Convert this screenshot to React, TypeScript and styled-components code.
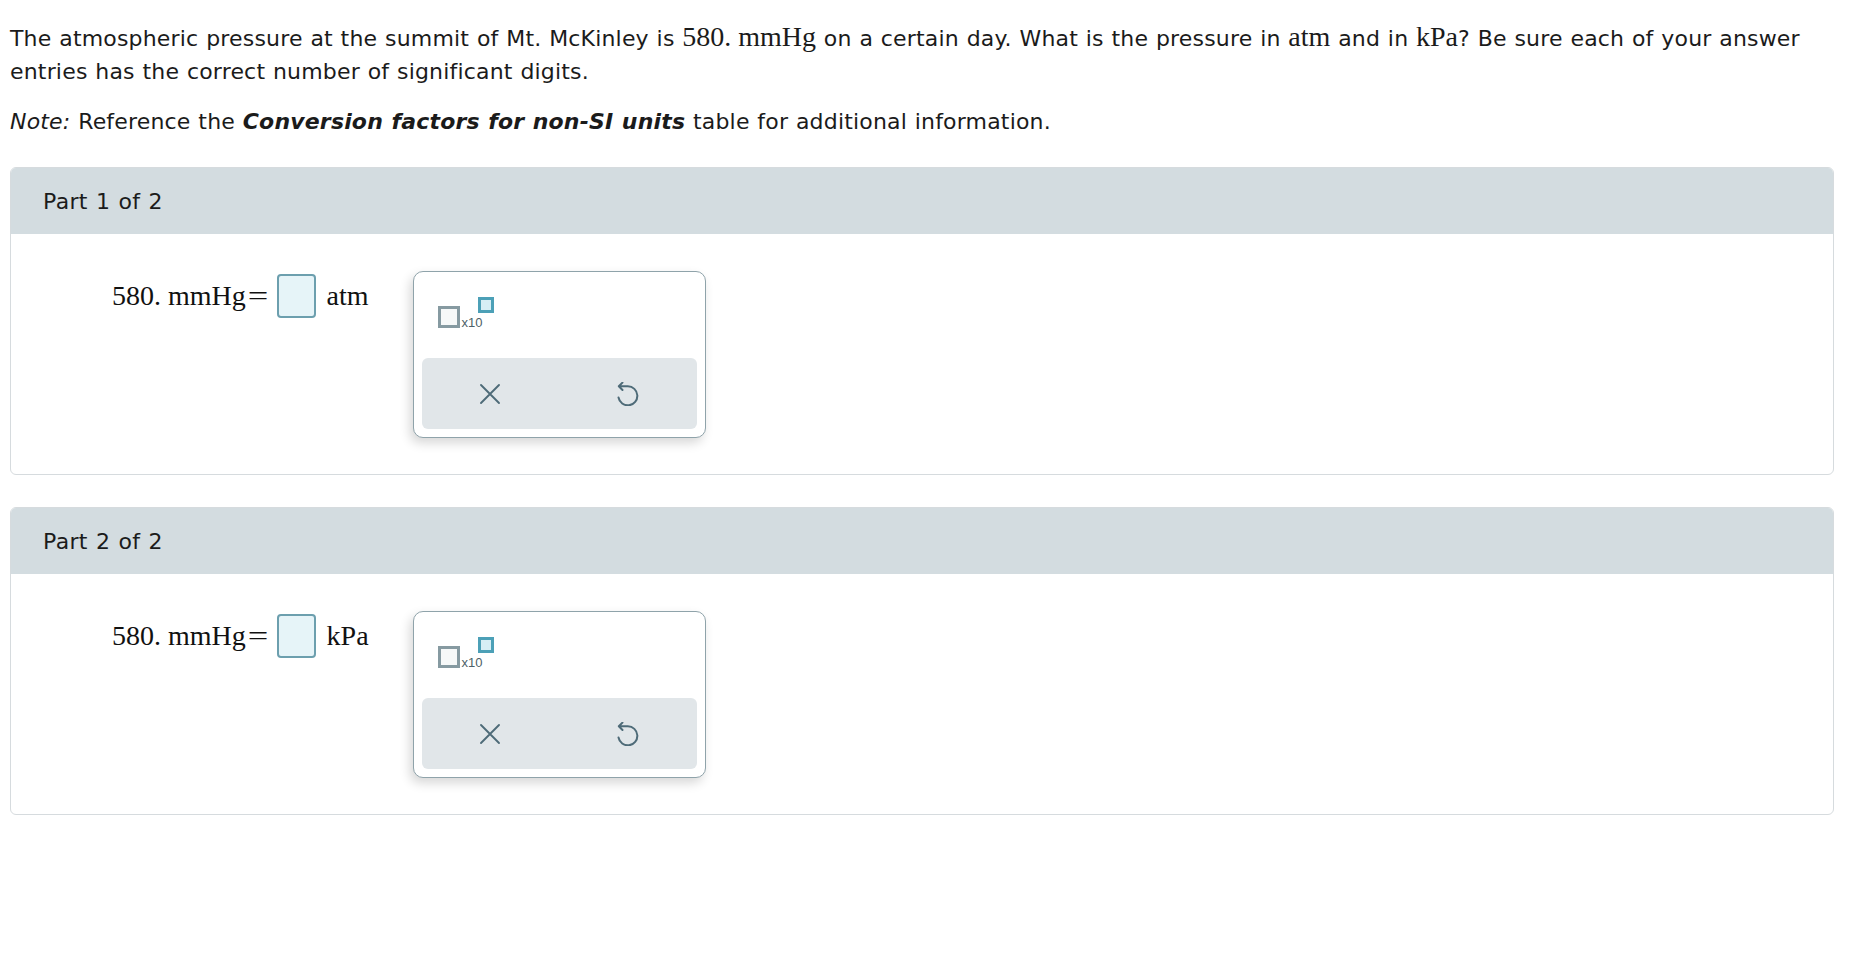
import React from "react";
import styled, { createGlobalStyle } from "styled-components";

const GlobalStyle = createGlobalStyle`
  html, body {
    margin: 0;
    padding: 0;
    background: #ffffff;
  }
  body {
    font-family: "DejaVu Sans", Verdana, sans-serif;
    color: #1b1b1b;
  }
`;

const Page = styled.div`
  padding: 22px 28px 40px 10px;
`;

const Prompt = styled.p`
  margin: 0;
  font-size: 22px;
  line-height: 33px;
  letter-spacing: 0.18px;
  word-spacing: 0.6px;
`;

const Note = styled(Prompt)`
  margin-top: 17px;
`;

const Math = styled.span`
  font-family: "Liberation Serif", "Times New Roman", serif;
  font-size: 28px;
  line-height: 1;
  letter-spacing: 0;
  word-spacing: 0;
`;

const Strong = styled.strong`
  font-weight: bold;
  font-style: italic;
`;

const Parts = styled.div`
  display: flex;
  flex-direction: column;
  gap: 32px;
  margin-top: 29px;
`;

const Panel = styled.section`
  border: 1px solid #d6dbde;
  border-radius: 6px;
  overflow: hidden;
`;

const PanelHead = styled.div`
  height: 66px;
  display: flex;
  align-items: center;
  padding-left: 32px;
  background: #d3dce0;
  font-size: 22px;
  letter-spacing: 0.35px;
  word-spacing: 0.8px;
`;

const PanelBody = styled.div`
  display: flex;
  align-items: flex-start;
  padding: 37px 0 36px 101px;
`;

const Equation = styled.div`
  display: flex;
  align-items: center;
  margin-top: 3px;
  font-family: "Liberation Serif", "Times New Roman", serif;
  font-size: 28px;
  color: #111;
`;

const Equals = styled.span`
  display: inline-block;
  margin: 0 11px 0 4px;
  transform: scaleX(1.3);
`;

const AnswerBox = styled.div`
  width: 39px;
  height: 44px;
  box-sizing: border-box;
  border: 2px solid #6c9fae;
  border-radius: 4px;
  background: #e6f4f8;
  margin-right: 11px;
`;

const Popup = styled.div`
  width: 293px;
  height: 167px;
  box-sizing: border-box;
  margin-left: 44px;
  padding: 8px;
  border: 1px solid #8fa3aa;
  border-radius: 10px;
  background: #fff;
  box-shadow: -3px 5px 11px rgba(0, 0, 0, 0.16);
  display: flex;
  flex-direction: column;
`;

const TopRow = styled.div`
  height: 78px;
  padding: 17px 0 0 16px;
  box-sizing: border-box;
`;

const Sci = styled.div`
  display: inline-flex;
  align-items: flex-end;
  height: 31px;
`;

const BaseBox = styled.span`
  width: 22px;
  height: 22px;
  box-sizing: border-box;
  border: 3px solid #869aa1;
  background: #f6f8f8;
`;

const TimesTen = styled.span`
  font-family: "Liberation Sans", Arial, sans-serif;
  font-size: 13px;
  line-height: 13px;
  color: #4d5f67;
  margin: 0 0 -1px 2px;
`;

const SupBox = styled.span`
  align-self: flex-start;
  width: 16px;
  height: 16px;
  box-sizing: border-box;
  margin-left: -5px;
  border: 3px solid #4ca0b7;
  background: #d6eef5;
`;

const ButtonBar = styled.div`
  height: 71px;
  border-radius: 6px;
  background: #e1e6e9;
  display: grid;
  grid-template-columns: 1fr 1fr;
`;

const IconButton = styled.button`
  border: 0;
  background: transparent;
  padding: 0;
  display: flex;
  align-items: center;
  justify-content: center;
  color: #4e6b78;
  cursor: pointer;
`;

const ClearIcon = () => (
  <svg width="24" height="24" viewBox="0 0 24 24" fill="none">
    <path d="M3 3 L21 21 M21 3 L3 21" stroke="currentColor" strokeWidth="1.9" strokeLinecap="round" />
  </svg>
);

const UndoIcon = () => (
  <svg width="24" height="24" viewBox="11 11 24 24" fill="none">
    <path
      d="M17.5 11.6 L13.8 15.3 L17.5 19 M14 15.3 H22.8 A9.5 9.5 0 1 1 13.5 26.5"
      stroke="currentColor"
      strokeWidth="2"
      strokeLinecap="round"
      strokeLinejoin="round"
    />
  </svg>
);

interface PartProps {
  index: number;
  total: number;
  unit: string;
}

const Part = ({ index, total, unit }: PartProps) => (
  <Panel>
    <PanelHead>
      Part {index} of {total}
    </PanelHead>
    <PanelBody>
      <Equation>
        <span>580.&nbsp;mmHg</span>
        <Equals>=</Equals>
        <AnswerBox />
        <span>{unit}</span>
      </Equation>
      <Popup>
        <TopRow>
          <Sci>
            <BaseBox />
            <TimesTen>x10</TimesTen>
            <SupBox />
          </Sci>
        </TopRow>
        <ButtonBar>
          <IconButton aria-label="clear">
            <ClearIcon />
          </IconButton>
          <IconButton aria-label="undo">
            <UndoIcon />
          </IconButton>
        </ButtonBar>
      </Popup>
    </PanelBody>
  </Panel>
);

export default function App() {
  return (
    <>
      <GlobalStyle />
      <Page>
        <Prompt>
          The atmospheric pressure at the summit of Mt. McKinley is <Math>580. mmHg</Math> on a
          certain day. What is the pressure in <Math>atm</Math> and in <Math>kPa</Math>? Be sure
          each of your answer entries has the correct number of significant digits.
        </Prompt>
        <Note>
          <em>Note:</em> Reference the <Strong>Conversion factors for non-SI units</Strong> table
          for additional information.
        </Note>
        <Parts>
          <Part index={1} total={2} unit="atm" />
          <Part index={2} total={2} unit="kPa" />
        </Parts>
      </Page>
    </>
  );
}
